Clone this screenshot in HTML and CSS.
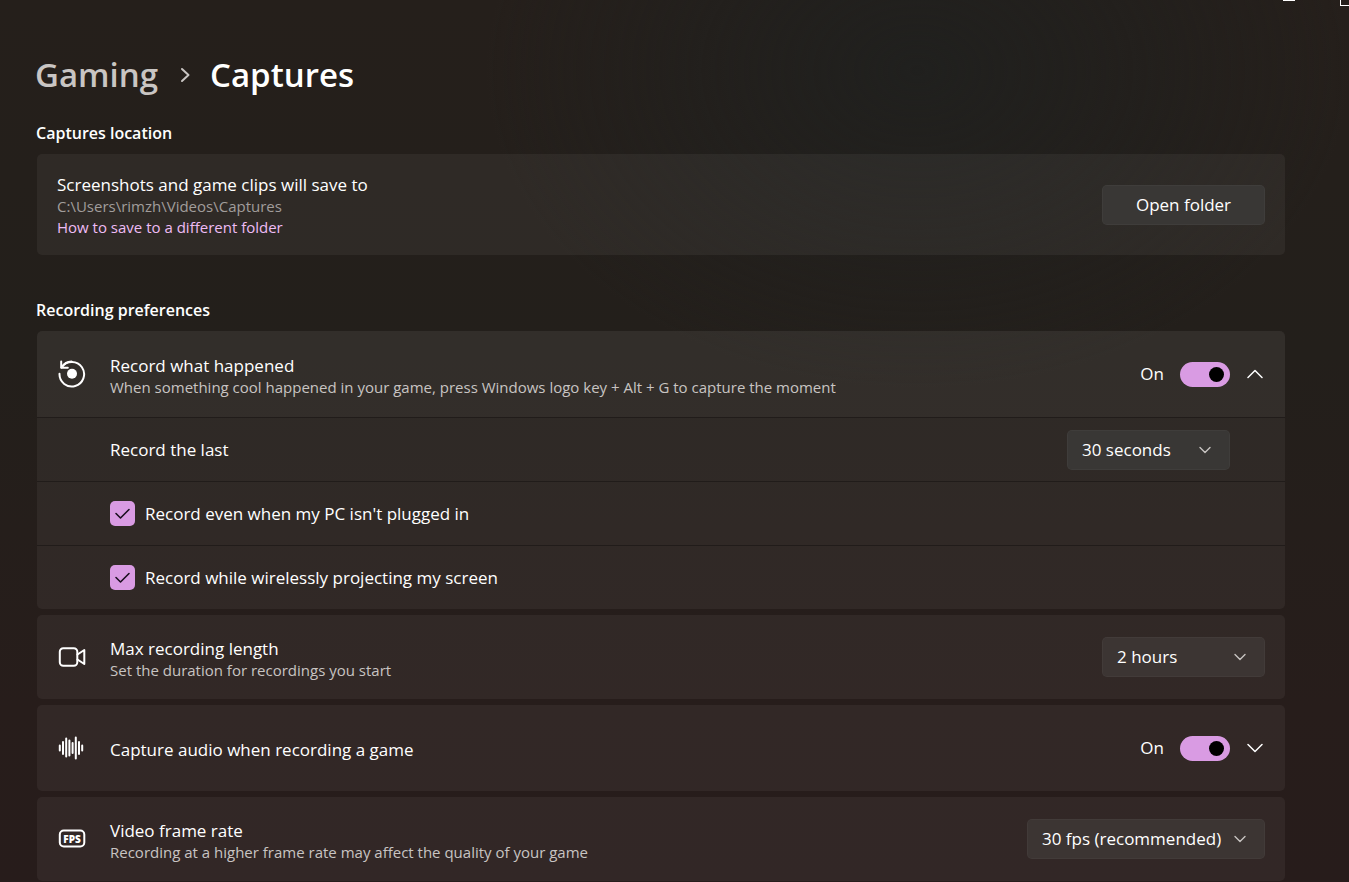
FILE: index.html
```html
<!DOCTYPE html>
<html lang="en">
<head>
    <meta charset="UTF-8">
    <meta name="viewport" content="width=device-width, initial-scale=1.0">
    <title>Gaming - Captures</title>
    <link rel="stylesheet" href="styles.css">
</head>
<body>
    <div class="window-controls">
        <button class="minimize" aria-label="Minimize"></button>
        <button class="maximize" aria-label="Maximize"></button>
    </div>

    <main class="page">
        <nav class="breadcrumb">
            <a href="#">Gaming</a>
            <svg class="crumb-arrow" viewBox="0 0 12 16" aria-hidden="true"><path d="M2 2l6.500 6L2 14"/></svg>
            <h1>Captures</h1>
        </nav>

        <section>
            <h2>Captures location</h2>
            <div class="card location">
                <div class="text">
                    <div class="title">Screenshots and game clips will save to</div>
                    <div class="path">C:\Users\rimzh\Videos\Captures</div>
                    <a class="help-link" href="#">How to save to a different folder</a>
                </div>
                <button class="btn">Open folder</button>
            </div>
        </section>

        <section class="preferences">
            <h2>Recording preferences</h2>

            <div class="card group">
                <div class="row header-row">
                    <svg class="icon" viewBox="0 0 28 28" aria-hidden="true">
                        <path d="M1.500 13.800A12.300 12.300 0 1 0 4 6.800"/>
                        <path d="M3.200 1.500V7.800H9.800"/>
                        <path d="M3.500 7.500C6 3.500 9.500 1.500 13.500 1.500"/>
                        <circle class="fill" cx="14" cy="13.800" r="5"/>
                    </svg>
                    <div class="text">
                        <label class="title" for="record">Record what happened</label>
                        <div class="desc">When something cool happened in your game, press Windows logo key + Alt + G to capture the moment</div>
                    </div>
                    <span class="state">On</span>
                    <input class="toggle" type="checkbox" role="switch" id="record" checked>
                    <button class="expander" aria-label="Collapse">
                        <svg viewBox="0 0 16 16" aria-hidden="true"><path d="M1 11.500L8 4.500l7 7"/></svg>
                    </button>
                </div>
                <div class="row sub-row">
                    <label class="title" for="last">Record the last</label>
                    <div class="select">
                        <select id="last"><option>30 seconds</option><option>1 minute</option></select>
                        <svg viewBox="0 0 12 12" aria-hidden="true"><path d="M1 3.500L6 8.500l5-5"/></svg>
                    </div>
                </div>
                <div class="row sub-row">
                    <label class="check">
                        <input type="checkbox" checked>
                        <svg viewBox="0 0 25 25" aria-hidden="true"><path d="M6 12.500l4.500 4.500 8.500-8.500"/></svg>
                        Record even when my PC isn't plugged in
                    </label>
                </div>
                <div class="row sub-row">
                    <label class="check">
                        <input type="checkbox" checked>
                        <svg viewBox="0 0 25 25" aria-hidden="true"><path d="M6 12.500l4.500 4.500 8.500-8.500"/></svg>
                        Record while wirelessly projecting my screen
                    </label>
                </div>
            </div>

            <div class="card row">
                <svg class="icon" viewBox="0 0 28 28" aria-hidden="true">
                    <rect x="1.800" y="5.200" width="17.500" height="17.500" rx="3.500"/>
                    <path d="M19.500 11.500L26.300 7V21L19.500 16.500"/>
                </svg>
                <div class="text">
                    <label class="title" for="length">Max recording length</label>
                    <div class="desc">Set the duration for recordings you start</div>
                </div>
                <div class="select">
                    <select id="length"><option>2 hours</option><option>1 hour</option></select>
                    <svg viewBox="0 0 12 12" aria-hidden="true"><path d="M1 3.500L6 8.500l5-5"/></svg>
                </div>
            </div>

            <div class="card row header-row">
                <svg class="icon" viewBox="0 0 28 28" aria-hidden="true">
                    <path class="bars" d="M1.800 11.500v5M5 8v12M8.200 4.500v18M11.400 6.500v15M14.600 9v10M17.800 3.500v21M21 8v12M24.200 11.500v5"/>
                </svg>
                <div class="text">
                    <label class="title" for="audio">Capture audio when recording a game</label>
                </div>
                <span class="state">On</span>
                <input class="toggle" type="checkbox" role="switch" id="audio" checked>
                <button class="expander" aria-label="Expand">
                    <svg viewBox="0 0 16 16" aria-hidden="true"><path d="M1 4.500l7 7 7-7"/></svg>
                </button>
            </div>

            <div class="card row">
                <svg class="icon" viewBox="0 0 28 28" aria-hidden="true">
                    <rect x="1.800" y="5.500" width="24.500" height="16" rx="4"/>
                    <text x="14" y="17.500" text-anchor="middle">FPS</text>
                </svg>
                <div class="text">
                    <label class="title" for="fps">Video frame rate</label>
                    <div class="desc">Recording at a higher frame rate may affect the quality of your game</div>
                </div>
                <div class="select wide">
                    <select id="fps"><option>30 fps (recommended)</option><option>60 fps</option></select>
                    <svg viewBox="0 0 12 12" aria-hidden="true"><path d="M1 3.500L6 8.500l5-5"/></svg>
                </div>
            </div>
        </section>
    </main>
</body>
</html>
```
FILE: styles.css
```css
* {
    box-sizing: border-box;
}

body {
    margin: 0;
    min-height: 100vh;
    font-family: "Open Sans", "Noto Sans", sans-serif;
    font-size: 17px;
    line-height: 22px;
    color: #fff;
    background:
        radial-gradient(ellipse 32% 36% at 68% 8%, #20201e, transparent),
        linear-gradient(#251f1b 0%, #231f1b 40%, #251e1b 60%, #271d1b 80%, #271c1b 100%);
}

button,
select {
    font: inherit;
    color: inherit;
}

svg {
    fill: none;
    stroke: currentColor;
    stroke-width: 2;
    stroke-linecap: round;
    stroke-linejoin: round;
}

/* caption buttons, cut off by the top edge */
.window-controls {
    position: absolute;
    top: -6px;
    right: -3px;
    display: flex;
    gap: 45px;
}

.window-controls button {
    width: 12px;
    height: 12px;
    padding: 0;
    border: 0 solid #fff;
    background: none;
}

.window-controls .minimize {
    height: 7px;
    border-bottom-width: 1px;
}

.window-controls .maximize {
    border-width: 1px;
}

.page {
    padding: 50px 64px 2px 37px;
}

.breadcrumb {
    display: flex;
    align-items: center;
    height: 50px;
    margin-left: -2px;
    font-size: 33px;
    line-height: 50px;
    font-weight: 600;
}

.breadcrumb a {
    color: #c9c5c3;
    text-decoration: none;
}

.breadcrumb h1 {
    margin: 0;
    font-size: 33px;
    font-weight: 600;
}

.crumb-arrow {
    width: 12px;
    height: 16px;
    margin: 0 18px 0 22px;
    color: #c9c5c3;
}

h2 {
    margin: 22px 0 10px -1px;
    font-size: 16px;
    line-height: 22px;
    font-weight: 600;
}

.card {
    border-radius: 5px;
    background: rgba(255, 255, 255, 0.05);
}

.location {
    display: flex;
    align-items: center;
    min-height: 101px;
    padding: 0 20px;
}

.text {
    flex: 1;
    padding-top: 3px;
}

.title {
    display: block;
}

.path,
.desc,
.help-link {
    display: block;
    font-size: 15px;
    line-height: 20px;
    color: #c8c4c2;
}

.path {
    color: #a19d9b;
}

.help-link {
    line-height: 22px;
    color: #eebcf5;
    text-decoration: none;
}

.btn {
    width: 163px;
    height: 40px;
    border: 1px solid rgba(255, 255, 255, 0.03);
    border-radius: 5px;
    background: #393735;
}

.preferences {
    display: flex;
    flex-direction: column;
    gap: 6px;
    padding-top: 44px;
}

.preferences h2 {
    margin: 0 0 4px -1px;
}

.row {
    display: flex;
    align-items: center;
    min-height: 84px;
    padding: 0 20px;
}

.header-row {
    min-height: 86px;
}

.group .header-row {
    border-radius: 5px 5px 0 0;
    background: rgba(255, 255, 230, 0.02);
}

.sub-row {
    min-height: 64px;
    padding: 0 55px 0 73px;
    justify-content: space-between;
    border-top: 1px solid #211c1a;
}

.icon {
    flex: none;
    width: 28px;
    height: 28px;
    margin: 0 24px 0 1px;
}

.icon .fill {
    fill: currentColor;
    stroke: none;
}

.icon text {
    fill: currentColor;
    stroke: none;
    font-size: 10px;
    font-weight: 800;
}

.state {
    margin-right: 16px;
}

.toggle {
    appearance: none;
    display: flex;
    align-items: center;
    justify-content: flex-end;
    width: 50px;
    height: 25px;
    margin: 0;
    padding: 0 6px;
    border-radius: 13px;
    background: #d99be3;
}

.toggle::before {
    content: "";
    width: 15px;
    height: 15px;
    border-radius: 50%;
    background: #000;
}

.toggle:not(:checked) {
    justify-content: flex-start;
    background: #6b6663;
}

.expander {
    display: flex;
    margin-left: 17px;
    padding: 0;
    border: 0;
    background: none;
}

.expander svg {
    width: 16px;
    height: 16px;
    stroke-width: 1.5;
}

.header-row .expander {
    margin-right: 2px;
}

.select {
    position: relative;
    width: 163px;
}

.select.wide {
    width: 238px;
}

.select select {
    appearance: none;
    width: 100%;
    height: 40px;
    padding: 0 40px 0 14px;
    border: 1px solid rgba(255, 255, 255, 0.03);
    border-radius: 5px;
    background: #3c3533;
}

.sub-row .select select {
    background: #393735;
}

.select svg {
    position: absolute;
    top: 14px;
    right: 19px;
    width: 12px;
    height: 12px;
    stroke: #c8c4c2;
    stroke-width: 1.4;
    pointer-events: none;
}

.check {
    display: flex;
    align-items: center;
}

.check input {
    appearance: none;
    width: 25px;
    height: 25px;
    margin: 0 10px 0 0;
    border-radius: 5px;
    background: #d99be3;
}

.check svg {
    width: 25px;
    height: 25px;
    margin: 0 10px 0 -35px;
    color: #1b1020;
    stroke-width: 1.6;
    pointer-events: none;
}

.check input:not(:checked) + svg {
    visibility: hidden;
}
```
